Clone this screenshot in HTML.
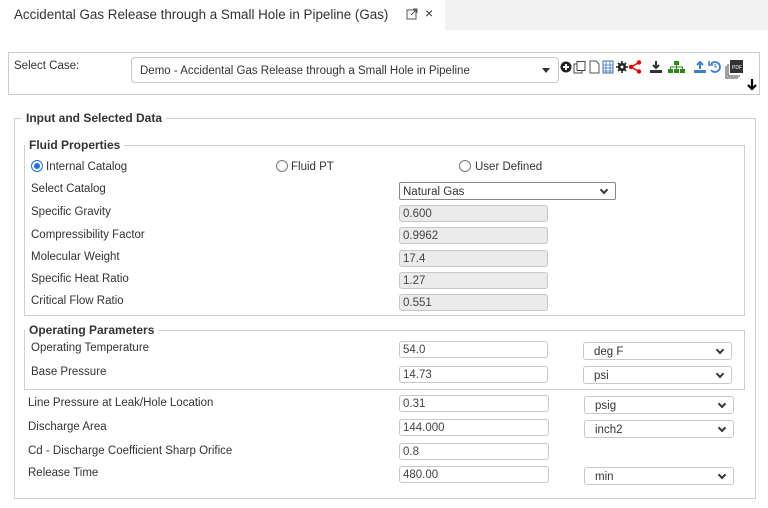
<!DOCTYPE html>
<html><head><style>
*{box-sizing:border-box;margin:0;padding:0}
body{width:768px;height:508px;background:#fff;font-family:"Liberation Sans",sans-serif;font-size:12px;color:#333;position:relative;overflow:hidden}
.a{position:absolute}
.topbar{left:0;top:0;width:768px;height:30px;background:#f2f2f2}
.tab{left:0;top:0;width:445px;height:30px;background:#fff}
.lbl{position:absolute;font-size:11.5px;color:#333;white-space:nowrap}
.in{position:absolute;height:17px;border:1px solid #c8c8c8;border-radius:3px;font-size:11.5px;padding:2px 0 0 3px;color:#444;background:#fff}
.ro{background:#ebebeb}
.sel{position:absolute;height:18px;border:1px solid #c8c8c8;border-radius:3px;font-size:11.5px;padding:3px 0 0 10px;background:#fff}
.sel:after{content:"";position:absolute;right:8px;top:4px;width:4px;height:4px;border-right:2px solid #333;border-bottom:2px solid #333;transform:rotate(45deg)}
.big:after{display:none}
.fs{position:absolute;border:1px solid #cfcfcf}
.lg{position:absolute;background:#fff;font-weight:bold;font-size:12px;padding:0 4px;color:#333}
.rad{position:absolute;width:12px;height:12px;border:1px solid #777;border-radius:50%;background:#fff}
</style></head><body>
<div class="a topbar"></div>
<div class="a tab"></div>
<div class="a" style="left:14px;top:7px;font-size:13.4px;color:#333;white-space:nowrap">Accidental Gas Release through a Small Hole in Pipeline (Gas)</div>
<svg class="a" style="left:406px;top:8px" width="12" height="12" viewBox="0 0 12 12"><rect x="1" y="2" width="9" height="9" fill="none" stroke="#555"/><path d="M5 7 L10 2 M7 1 H11 V5" stroke="#555" fill="none"/></svg>
<div class="a" style="left:425px;top:5px;font-size:14px;color:#333">×</div>

<div class="a" style="left:8px;top:52px;width:752px;height:43px;border:1px solid #ccc"></div>
<div class="lbl" style="left:14px;top:60px">Select Case:</div>
<div class="sel big" style="left:131px;top:57px;width:428px;height:26px;padding:7px 0 0 8px;border-radius:4px">Demo - Accidental Gas Release through a Small Hole in Pipeline</div>
<div class="a" style="left:542px;top:68px;width:0;height:0;border-left:4px solid transparent;border-right:4px solid transparent;border-top:5px solid #333"></div>
<svg class="a" style="left:560px;top:60px" width="200" height="34" viewBox="0 0 200 34">
<circle cx="6" cy="7" r="5.5" fill="#222"/><path d="M3 7h6M6 4v6" stroke="#fff" stroke-width="2"/>
<rect x="14" y="4" width="8" height="9" fill="none" stroke="#444"/><rect x="17" y="1.5" width="8" height="9" fill="#fff" stroke="#444"/>
<path d="M30 1h6l3 3v9h-9z" fill="none" stroke="#555"/>
<rect x="43" y="1" width="10" height="12" fill="none" stroke="#3a6fbf"/><path d="M43 5h10M43 8h10M43 11h10M46 1v12M50 1v12" stroke="#3a6fbf" stroke-width=".8"/>
<circle cx="62" cy="7" r="4" fill="#222"/><path d="M62 1v12M56 7h12M58 3l8 8M66 3l-8 8" stroke="#222" stroke-width="1.6"/><circle cx="62" cy="7" r="1.5" fill="#fff"/>
<circle cx="71" cy="7" r="2.2" fill="#e00"/><circle cx="79" cy="2.5" r="2.2" fill="#e00"/><circle cx="79" cy="11.5" r="2.2" fill="#e00"/><path d="M71 7L79 2.5M71 7L79 11.5" stroke="#e00" stroke-width="1.5"/>
<path d="M96 1v7M93 5l3 3 3-3" stroke="#333" stroke-width="2" fill="none"/><rect x="90" y="10" width="12" height="3" fill="#333"/>
<rect x="114" y="1" width="5" height="4" fill="#2a8a1a"/><rect x="108" y="9" width="5" height="4" fill="#2a8a1a"/><rect x="114" y="9" width="5" height="4" fill="#2a8a1a"/><rect x="120" y="9" width="5" height="4" fill="#2a8a1a"/><path d="M116.5 5v4M110.5 9V7h12v2" stroke="#2a8a1a" fill="none"/>
<path d="M140 9V2M137 5l3-3 3 3" stroke="#3a7fd0" stroke-width="2" fill="none"/><rect x="134" y="10" width="12" height="3" fill="#3a7fd0"/>
<path d="M151 4a5 5 0 1 1 0 6" stroke="#3a7fd0" stroke-width="1.8" fill="none"/><path d="M149 1v4h4" stroke="#3a7fd0" stroke-width="1.5" fill="none"/><path d="M155 4v3h2" stroke="#3a7fd0" fill="none"/>
<path d="M166 6v12h12M168 4v12h12" stroke="#444" fill="none"/><rect x="170" y="0" width="13" height="13" fill="#333"/><text x="172" y="9" font-size="5" fill="#fff" font-family="Liberation Sans">PDF</text>
<path d="M192 19v10M188 25l4 4 4-4" stroke="#000" stroke-width="2.2" fill="none"/>
</svg>

<div class="fs" style="left:14px;top:118px;width:742px;height:381px"></div>
<div class="lg" style="left:22px;top:111px">Input and Selected Data</div>

<div class="fs" style="left:24px;top:145px;width:721px;height:171px"></div>
<div class="lg" style="left:25px;top:138px">Fluid Properties</div>
<div class="rad" style="left:31px;top:160px;border:1px solid #1a73e8"></div><div class="a" style="left:34px;top:163px;width:6px;height:6px;border-radius:50%;background:#1a73e8"></div>
<div class="lbl" style="left:46px;top:161px">Internal Catalog</div>
<div class="rad" style="left:276px;top:160px"></div><div class="lbl" style="left:291px;top:161px">Fluid PT</div>
<div class="rad" style="left:459px;top:160px"></div><div class="lbl" style="left:475px;top:161px">User Defined</div>
<div class="lbl" style="left:31px;top:183px">Select Catalog</div>
<div class="sel" style="left:399px;top:182px;width:217px;border:1px solid #888;border-radius:2px;padding-left:3px">Natural Gas</div>
<div class="lbl" style="left:31px;top:206px">Specific Gravity</div><div class="in ro" style="left:399px;top:205px;width:149px">0.600</div>
<div class="lbl" style="left:31px;top:229px">Compressibility Factor</div><div class="in ro" style="left:399px;top:227px;width:149px">0.9962</div>
<div class="lbl" style="left:31px;top:251px">Molecular Weight</div><div class="in ro" style="left:399px;top:250px;width:149px">17.4</div>
<div class="lbl" style="left:31px;top:273px">Specific Heat Ratio</div><div class="in ro" style="left:399px;top:272px;width:149px">1.27</div>
<div class="lbl" style="left:31px;top:295px">Critical Flow Ratio</div><div class="in ro" style="left:399px;top:294px;width:149px">0.551</div>

<div class="fs" style="left:24px;top:330px;width:721px;height:60px"></div>
<div class="lg" style="left:25px;top:323px">Operating Parameters</div>
<div class="lbl" style="left:31px;top:342px">Operating Temperature</div><div class="in" style="left:399px;top:341px;width:149px">54.0</div><div class="sel" style="left:583px;top:342px;width:149px">deg F</div>
<div class="lbl" style="left:31px;top:366px">Base Pressure</div><div class="in" style="left:399px;top:366px;width:149px">14.73</div><div class="sel" style="left:583px;top:366px;width:149px">psi</div>

<div class="lbl" style="left:28px;top:397px">Line Pressure at Leak/Hole Location</div><div class="in" style="left:399px;top:395px;width:150px">0.31</div><div class="sel" style="left:584px;top:396px;width:150px">psig</div>
<div class="lbl" style="left:28px;top:421px">Discharge Area</div><div class="in" style="left:399px;top:419px;width:150px">144.000</div><div class="sel" style="left:584px;top:420px;width:150px">inch2</div>
<div class="lbl" style="left:28px;top:445px">Cd - Discharge Coefficient Sharp Orifice</div><div class="in" style="left:399px;top:443px;width:150px">0.8</div>
<div class="lbl" style="left:28px;top:467px">Release Time</div><div class="in" style="left:399px;top:466px;width:150px">480.00</div><div class="sel" style="left:584px;top:467px;width:150px">min</div>
</body></html>
